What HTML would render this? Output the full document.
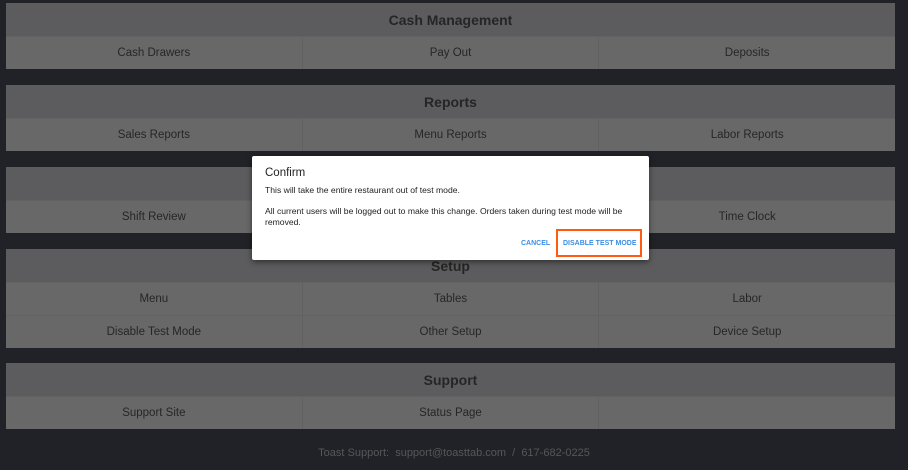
<!DOCTYPE html>
<html><head><style>
body{margin:0;width:908px;height:470px;background:#212227;font-family:"Liberation Sans",sans-serif;position:relative;overflow:hidden}
.sec{position:absolute;left:6px;width:889px}
.h{height:33px;background:#5c5c5e;text-align:center;line-height:34px;font-size:14px;font-weight:bold;color:#252525}
.r{display:flex;height:32px;background:#686868;border-top:1px solid #626262}
.r div{flex:1;text-align:center;line-height:32px;font-size:11.5px;color:#262626;border-right:1px solid #616161}
.r div:last-child{border-right:none}
.foot{position:absolute;top:446px;width:100%;text-align:center;font-size:11px;color:#575757;line-height:14px}
.dlg{position:absolute;left:252px;top:156px;width:397px;height:104px;background:#fff;border-radius:2px;box-shadow:0 2px 6px rgba(0,0,0,.5)}
.dlg .t{position:absolute;left:13px;top:11px;font-size:11.5px;color:#222}
.dlg p{position:absolute;left:13px;margin:0;font-size:8.6px;color:#222;line-height:11px;width:372px}
.btn{position:absolute;font-size:7px;font-weight:bold;color:#3a8ee6;letter-spacing:0}
.ob{position:absolute;left:304px;top:73px;width:82px;height:24px;border:2px solid #ff5a10}
</style></head><body>
<div class="sec" style="top:3px"><div class="h">Cash Management</div><div class="r"><div>Cash Drawers</div><div>Pay Out</div><div>Deposits</div></div></div>
<div class="sec" style="top:85px"><div class="h">Reports</div><div class="r"><div>Sales Reports</div><div>Menu Reports</div><div>Labor Reports</div></div></div>
<div class="sec" style="top:167px"><div class="h">Employees</div><div class="r"><div>Shift Review</div><div></div><div>Time Clock</div></div></div>
<div class="sec" style="top:249px"><div class="h">Setup</div><div class="r"><div>Menu</div><div>Tables</div><div>Labor</div></div><div class="r"><div>Disable Test Mode</div><div>Other Setup</div><div>Device Setup</div></div></div>
<div class="sec" style="top:363px"><div class="h">Support</div><div class="r"><div>Support Site</div><div>Status Page</div><div></div></div></div>
<div class="foot">Toast Support:&nbsp; support@toasttab.com&nbsp; /&nbsp; 617-682-0225</div>
<div class="dlg">
<div class="t">Confirm</div>
<p style="top:29px">This will take the entire restaurant out of test mode.</p>
<p style="top:50px">All current users will be logged out to make this change. Orders taken during test mode will be<br>removed.</p>
<div class="btn" style="left:269px;top:84px">CANCEL</div>
<div class="ob"></div>
<div class="btn" style="left:311px;top:84px">DISABLE TEST MODE</div>
</div>
</body></html>
